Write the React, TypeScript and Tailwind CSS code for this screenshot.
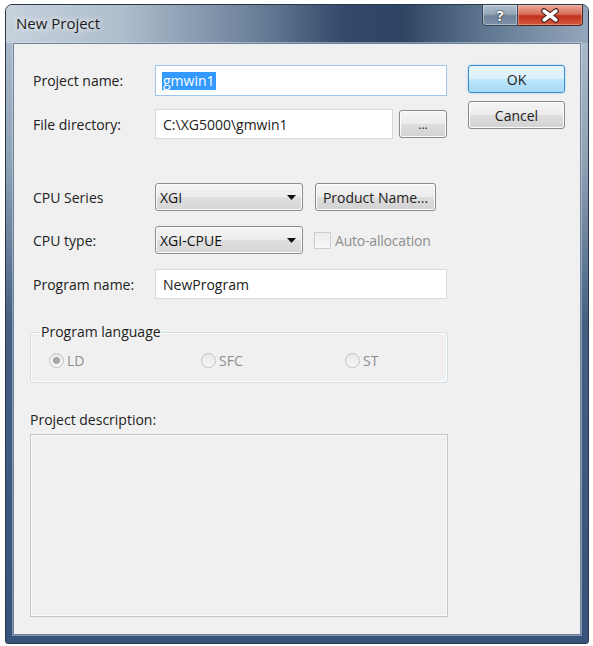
import React from "react";

const font = "font-['Open_Sans','Noto_Sans',sans-serif]";

function Label({ children }: { children: React.ReactNode }) {
  return <div className="w-[125px] pl-[3px] text-[14px] text-[#222]">{children}</div>;
}

function TextBox({ w, h, children, focused }: { w: string; h: string; children: React.ReactNode; focused?: boolean }) {
  return (
    <div
      className={`${w} ${h} flex items-center bg-white pl-[7px] text-[14px] text-[#222] border ${
        focused ? "border-[#9ec6ee]" : "border-[#d3dae2]"
      }`}
    >
      {children}
    </div>
  );
}

function Btn({ w, h, children, def }: { w: string; h: string; children: React.ReactNode; def?: boolean }) {
  return (
    <div
      className={`${w} ${h} flex items-center justify-center rounded-[3px] border text-[14px] text-[#222] ${
        def
          ? "border-[#3c8fd1] bg-[linear-gradient(#eaf6fd,#d9f0fc_50%,#bee6fd_51%,#a7d9f5)] shadow-[0_0_2px_#7fc3f0]"
          : "border-[#8a8a8a] bg-[linear-gradient(#f5f5f5,#ececec_50%,#dedede_51%,#d2d2d2)] shadow-[inset_0_0_0_1px_#fcfcfc]"
      }`}
    >
      {children}
    </div>
  );
}

function Select({ value }: { value: string }) {
  return (
    <div className="w-[148px] h-full flex items-center justify-between rounded-[3px] border border-[#8e8e8e] bg-[linear-gradient(#f6f6f6,#ececec_50%,#dfdfdf_51%,#d6d6d6)] shadow-[inset_0_0_0_1px_#fbfbfb] pl-[4px] pr-[6px] text-[14px] text-[#111]">
      <span>{value}</span>
      <svg width="9" height="5" viewBox="0 0 9 5">
        <path d="M0 0 H9 L4.5 5 Z" fill="#111" />
      </svg>
    </div>
  );
}

function Radio({ checked, label }: { checked?: boolean; label: string }) {
  return (
    <div className="flex items-center gap-[3px]">
      <div className="w-[15px] h-[15px] rounded-full border border-[#c2c2c2] bg-[linear-gradient(#e8e8e8,#f7f7f7)] flex items-center justify-center">
        {checked && <div className="w-[7px] h-[7px] rounded-full bg-[#a8a8a8] border border-[#9a9a9a]" />}
      </div>
      <span className="text-[14px] text-[#8e8e8e]">{label}</span>
    </div>
  );
}

export default function App() {
  return (
    <div className={`w-[593px] h-[646px] bg-white pt-[4px] pl-[5px] ${font}`}>
      <div className="w-[584px] h-[640px] border border-[#2b3746] rounded-t-[7px] rounded-b-[3px] overflow-hidden bg-[linear-gradient(#b3c1cf,#8ea1b5_25%,#445f82_50%,#37537b_100%)]">
        {/* Title bar */}
        <div className="h-[38px] flex items-start justify-between bg-[linear-gradient(90deg,#c6d1dc,#aebdcc_20%,#6d839c_42%,#34496a_58%,#2e4463_68%,#5e7690_82%,#93a7bc_100%)]">
          <div className="mt-[7px] ml-[10px] text-[15px] text-[#1b1b1b] [text-shadow:0_0_6px_rgba(255,255,255,0.9),0_0_10px_rgba(255,255,255,0.6)]">
            New Project
          </div>
          <div className="flex mr-[5px] -mt-[1px]">
            <div className="w-[36px] h-[22px] flex items-center justify-center rounded-bl-[4px] border border-[#3a4959] bg-[linear-gradient(#b6c3d0,#93a5b8_45%,#6f849b_55%,#7d91a7)] shadow-[inset_0_0_0_1px_rgba(255,255,255,0.35)]">
              <span className="text-[15px] font-bold text-white [text-shadow:0_0_2px_#222,0_0_1px_#222]">?</span>
            </div>
            <div className="w-[65px] h-[22px] flex items-center justify-center rounded-br-[4px] border border-l-0 border-[#4a2622] bg-[linear-gradient(#e9a796,#d9705a_45%,#c2301c_55%,#d45a3e)] shadow-[inset_0_0_0_1px_rgba(255,220,210,0.35)]">
              <svg width="20" height="15" viewBox="0 0 20 15">
                <path d="M4 3 L16 12 M16 3 L4 12" stroke="#3b1a16" strokeWidth="5.5" strokeLinecap="round" />
                <path d="M4 3 L16 12 M16 3 L4 12" stroke="#ffffff" strokeWidth="3.5" strokeLinecap="round" />
              </svg>
            </div>
          </div>
        </div>

        {/* Client area */}
        <div className="mx-[7px] h-[592px] border border-[#6f8299] bg-[#f0f0f0] shadow-[0_0_0_1px_rgba(220,230,240,0.45)] flex items-start">
          <div className="flex-1 pl-[16px] flex flex-col">
            <div className="mt-[21px] h-[31px] flex items-center">
              <Label>Project name:</Label>
              <TextBox w="w-[292px]" h="h-full" focused>
                <span className="bg-[#3399ff] text-white leading-[18px] px-[1px] -ml-[1px]">gmwin1</span>
              </TextBox>
            </div>
            <div className="mt-[13px] h-[30px] flex items-center">
              <Label>File directory:</Label>
              <TextBox w="w-[238px]" h="h-full">C:\XG5000\gmwin1</TextBox>
              <div className="ml-[6px]">
                <Btn w="w-[48px]" h="h-[28px]">
                  <span className="text-[12px] mt-[2px]">...</span>
                </Btn>
              </div>
            </div>
            <div className="mt-[44px] h-[28px] flex items-center">
              <Label>CPU Series</Label>
              <Select value="XGI" />
              <div className="ml-[12px]">
                <Btn w="w-[121px]" h="h-[28px]">Product Name...</Btn>
              </div>
            </div>
            <div className="mt-[15px] h-[28px] flex items-center">
              <Label>CPU type:</Label>
              <Select value="XGI-CPUE" />
              <div className="ml-[11px] w-[17px] h-[17px] border border-[#cfcfcf] bg-[linear-gradient(#ececec,#f8f8f8)]" />
              <span className="ml-[4px] text-[14px] text-[#8e8e8e] tracking-[-0.2px]">Auto-allocation</span>
            </div>
            <div className="mt-[15px] h-[30px] flex items-center">
              <Label>Program name:</Label>
              <TextBox w="w-[292px]" h="h-full">NewProgram</TextBox>
            </div>
            <fieldset className="mt-[23px] w-[418px] border border-[#d3dde4] rounded-[3px] shadow-[inset_0_0_0_1px_#fafcfd] pb-[14px]">
              <legend className="ml-[9px] px-[1px] leading-[20px] text-[14px] text-[#222]">Program language</legend>
              <div className="mt-[10px] pl-[18px] flex items-center h-[16px]">
                <div className="w-[152px]">
                  <Radio checked label="LD" />
                </div>
                <div className="w-[144px]">
                  <Radio label="SFC" />
                </div>
                <Radio label="ST" />
              </div>
            </fieldset>
            <div className="mt-[27px] h-[20px] leading-[20px] text-[14px] text-[#222]">Project description:</div>
            <div className="mt-[4px] w-[418px] h-[183px] border border-[#c4c4c4] bg-[#f0f0f0] shadow-[inset_0_0_0_1px_#fafafa]" />
          </div>
          <div className="mr-[15px] mt-[21px] flex flex-col gap-[8px]">
            <Btn w="w-[97px]" h="h-[28px]" def>
              OK
            </Btn>
            <Btn w="w-[97px]" h="h-[28px]">Cancel</Btn>
          </div>
        </div>
      </div>
    </div>
  );
}
